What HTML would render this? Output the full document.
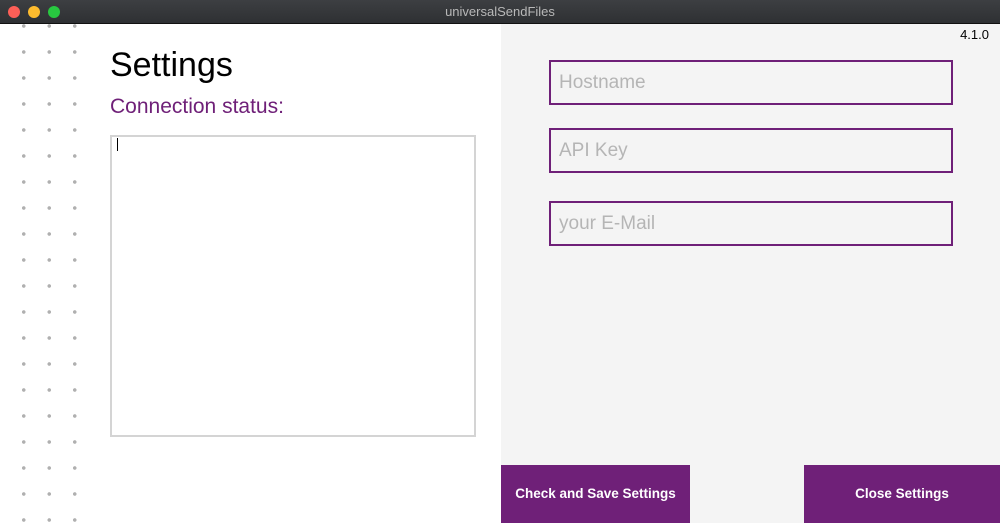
<!DOCTYPE html><html><head><style>
body{margin:0;width:1000px;height:523px;overflow:hidden;font-family:"Liberation Sans",sans-serif;background:#fff;position:relative}
.tb{position:absolute;left:0;top:0;width:1000px;height:23px;background:linear-gradient(#3d3f42,#2e3033);border-bottom:1px solid #111;color:#b8b8b8;font-size:13px;text-align:center;line-height:23px}
.l{position:absolute;top:6px;width:12px;height:12px;border-radius:50%}
.dots{position:absolute;left:0;top:24px;width:90px;height:499px;background-image:radial-gradient(circle,#b0b0b0 1.6px,transparent 2px);background-size:25.5px 26px;background-position:11px -11px}
.right{position:absolute;left:501px;top:24px;width:499px;height:499px;background:#f4f4f4}
.inp{position:absolute;left:549px;height:41px;border:2px solid #6f2078;background:#f4f4f4;color:#b5b5b5;font-size:19px;line-height:41px;padding-left:8px;width:392px}
.btn{position:absolute;top:465px;height:58px;background:#6f2078;color:#fff;font-weight:bold;font-size:13.5px;text-align:center;line-height:58px}
</style></head><body>
<div class="tb">universalSendFiles</div>
<div class="l" style="left:8px;background:#fe5f57"></div>
<div class="l" style="left:28px;background:#febc2e"></div>
<div class="l" style="left:48px;background:#28c840"></div>
<div class="dots"></div>
<div style="position:absolute;left:110px;top:46px;font-size:34px;color:#000">Settings</div>
<div style="position:absolute;left:110px;top:95px;font-size:21px;color:#6f2078">Connection status:</div>
<div style="position:absolute;left:110px;top:135px;width:362px;height:298px;border:2px solid #d4d4d4"></div>
<div style="position:absolute;left:117px;top:138px;width:1px;height:13px;background:#000"></div>
<div class="right"></div>
<div style="position:absolute;right:11px;top:27px;font-size:13px;color:#000">4.1.0</div>
<div class="inp" style="top:60px">Hostname</div>
<div class="inp" style="top:128px">API Key</div>
<div class="inp" style="top:201px">your E-Mail</div>
<div class="btn" style="left:501px;width:189px">Check and Save Settings</div>
<div class="btn" style="left:804px;width:196px">Close Settings</div>
</body></html>
